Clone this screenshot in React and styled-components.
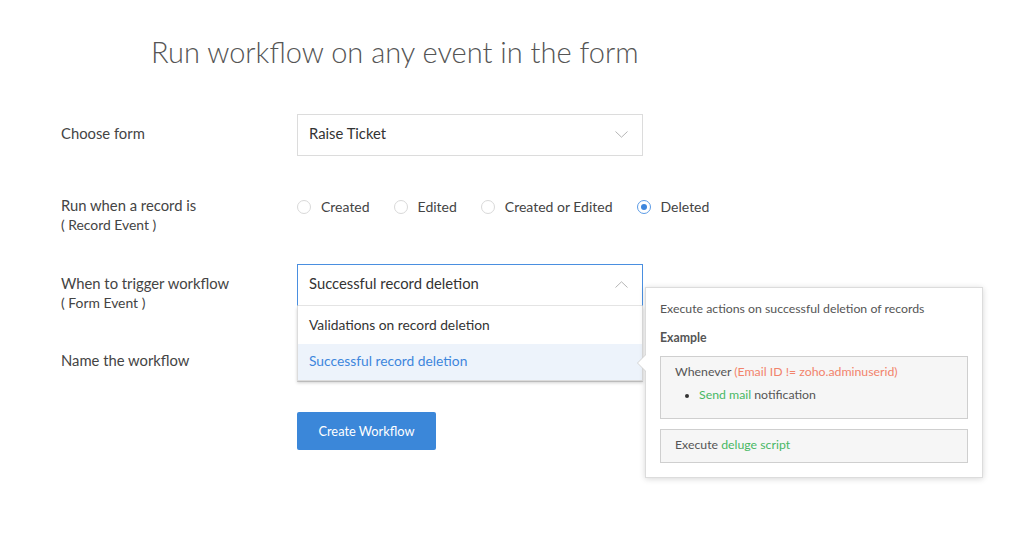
import React from "react";
import styled, { createGlobalStyle } from "styled-components";

const Global = createGlobalStyle`
  html, body { margin: 0; padding: 0; background: #fff; }
  body { font-family: Lato, "Open Sans", sans-serif; color: #444; -webkit-font-smoothing: antialiased; }
  * { box-sizing: border-box; }
`;

const Page = styled.div`
  padding: 35px 0 0 61px;
  width: 1024px;
  height: 536px;
  overflow: hidden;
`;

const Title = styled.h1`
  margin: 0 0 0 90px;
  font-size: 29px;
  font-weight: 300;
  line-height: 34px;
  color: #555;
`;

const Row = styled.div`
  display: grid;
  grid-template-columns: 236px 346px;
  margin-top: ${(p) => p.$mt}px;
  align-items: ${(p) => p.$align || "center"};
`;

const Label = styled.div`
  font-size: 14.8px;
  line-height: 19px;
  color: #444;
  padding-top: ${(p) => p.$pt || 0}px;
  padding-bottom: ${(p) => p.$pb || 0}px;
`;

const Sub = styled.div`
  font-size: 13.9px;
`;

const Field = styled.div`
  position: relative;
`;

const Select = styled.div`
  height: 42px;
  border: 1px solid ${(p) => (p.$focus ? "#4a8fe0" : "#dcdcdc")};
  ${(p) => p.$focus && "border-bottom-color: #e6e6e6;"}
  background: #fff;
  display: flex;
  align-items: center;
  justify-content: space-between;
  padding: 0 14px 5px 11px;
  font-size: 14.8px;
  color: #333;
  svg { margin-top: 4px; }
`;

const Chevron = ({ up }) => (
  <svg width="13" height="7" viewBox="0 0 13 7" style={{ display: "block" }}>
    <polyline
      points={up ? "0.5,6.5 6.5,0.8 12.5,6.5" : "0.5,0.5 6.5,6.2 12.5,0.5"}
      fill="none"
      stroke="#b5b5b5"
      strokeWidth="1"
    />
  </svg>
);

const Radios = styled.div`
  display: flex;
  align-items: center;
  padding-top: 2px;
  height: 19px;
`;

const RadioItem = styled.label`
  display: flex;
  align-items: center;
  gap: 10px;
  margin-right: 24px;
  font-size: 14px;
  color: #444;
  white-space: nowrap;
`;

const Circle = styled.span`
  width: 14px;
  height: 14px;
  border-radius: 50%;
  border: 1px solid ${(p) => (p.$on ? "#5b9be6" : "#d9d9d9")};
  display: flex;
  align-items: center;
  justify-content: center;
  &::after {
    content: "";
    width: 6px;
    height: 6px;
    border-radius: 50%;
    background: ${(p) => (p.$on ? "#3d86dd" : "transparent")};
  }
`;

const Menu = styled.div`
  position: absolute;
  top: 42px;
  left: 0;
  width: 100%;
  background: #fff;
  border: 1px solid #dcdcdc;
  border-top: none;
  padding-top: 2px;
  box-shadow: 0 2px 3px rgba(0, 0, 0, 0.18);
  z-index: 3;
`;

const Option = styled.div`
  height: 36px;
  display: flex;
  align-items: center;
  padding: 0 0 4px 11px;
  font-size: 13.8px;
  color: ${(p) => (p.$active ? "#3d86dd" : "#333")};
  background: ${(p) => (p.$active ? "#edf3fb" : "#fff")};
`;

const Input = styled.div`
  height: 42px;
  border: 1px solid #dcdcdc;
  background: #fff;
`;

const Button = styled.button`
  width: 139px;
  height: 38px;
  border: none;
  border-radius: 2px;
  background: #3b87d9;
  color: #fff;
  font-family: Lato, sans-serif;
  font-size: 12.8px;
  padding: 0;
`;

const Popover = styled.div`
  position: absolute;
  left: 348px;
  top: 23px;
  width: 338px;
  height: 191px;
  background: #fff;
  border: 1px solid #dcdcdc;
  box-shadow: 0 1px 6px rgba(0, 0, 0, 0.16);
  padding: 13px 14px 0 14px;
  z-index: 4;
  font-size: 12.3px;
  color: #555;
  &::before {
    content: "";
    position: absolute;
    left: -9px;
    top: 66px;
    width: 0;
    height: 0;
    border-top: 9px solid transparent;
    border-bottom: 9px solid transparent;
    border-right: 9px solid #d4d4d4;
  }
  &::after {
    content: "";
    position: absolute;
    left: -8px;
    top: 67px;
    width: 0;
    height: 0;
    border-top: 8px solid transparent;
    border-bottom: 8px solid transparent;
    border-right: 8px solid #fff;
  }
`;

const PopText = styled.div`
  line-height: 16px;
  margin-top: ${(p) => p.$mt || 0}px;
  font-weight: ${(p) => (p.$bold ? 700 : 400)};
  color: #555;
`;

const Box = styled.div`
  margin-top: ${(p) => p.$mt}px;
  width: 308px;
  height: ${(p) => p.$h}px;
  background: #f6f6f6;
  border: 1px solid #cfcfcf;
  padding: ${(p) => p.$pt}px 14px 0 14px;
  font-size: 12.3px;
  line-height: 16px;
  color: #555;
`;

const Bullets = styled.ul`
  margin: 7px 0 0 0;
  padding: 0 0 0 24px;
  li { line-height: 16px; }
  li::marker { color: #333; font-size: 11px; }
`;

const Red = styled.span`
  color: #f2836b;
`;

const Green = styled.span`
  color: #48b864;
`;

const radios = [
  { label: "Created" },
  { label: "Edited" },
  { label: "Created or Edited" },
  { label: "Deleted", on: true },
];

export default function App() {
  return (
    <Page>
      <Global />
      <Title>Run workflow on any event in the form</Title>

      <Row $mt={45}>
        <Label $pb={4}>Choose form</Label>
        <Field>
          <Select>
            <span>Raise Ticket</span>
            <Chevron />
          </Select>
        </Field>
      </Row>

      <Row $mt={40} $align="start">
        <Label>
          Run when a record is
          <Sub>( Record Event )</Sub>
        </Label>
        <Radios>
          {radios.map((r) => (
            <RadioItem key={r.label}>
              <Circle $on={r.on} />
              {r.label}
            </RadioItem>
          ))}
        </Radios>
      </Row>

      <Row $mt={30} $align="start">
        <Label $pt={10}>
          When to trigger workflow
          <Sub>( Form Event )</Sub>
        </Label>
        <Field>
          <Select $focus>
            <span>Successful record deletion</span>
            <Chevron up />
          </Select>
          <Menu>
            <Option>Validations on record deletion</Option>
            <Option $active>Successful record deletion</Option>
          </Menu>
          <Popover>
            <PopText>Execute actions on successful deletion of records</PopText>
            <PopText $bold $mt={13}>Example</PopText>
            <Box $mt={10} $h={63} $pt={7}>
              Whenever <Red>(Email ID != zoho.adminuserid)</Red>
              <Bullets>
                <li>
                  <Green>Send mail</Green> notification
                </li>
              </Bullets>
            </Box>
            <Box $mt={10} $h={34} $pt={7}>
              Execute <Green>deluge script</Green>
            </Box>
          </Popover>
        </Field>
      </Row>

      <Row $mt={28}>
        <Label $pb={2}>Name the workflow</Label>
        <Field>
          <Input />
        </Field>
      </Row>

      <Row $mt={30}>
        <span />
        <div>
          <Button>Create Workflow</Button>
        </div>
      </Row>
    </Page>
  );
}
